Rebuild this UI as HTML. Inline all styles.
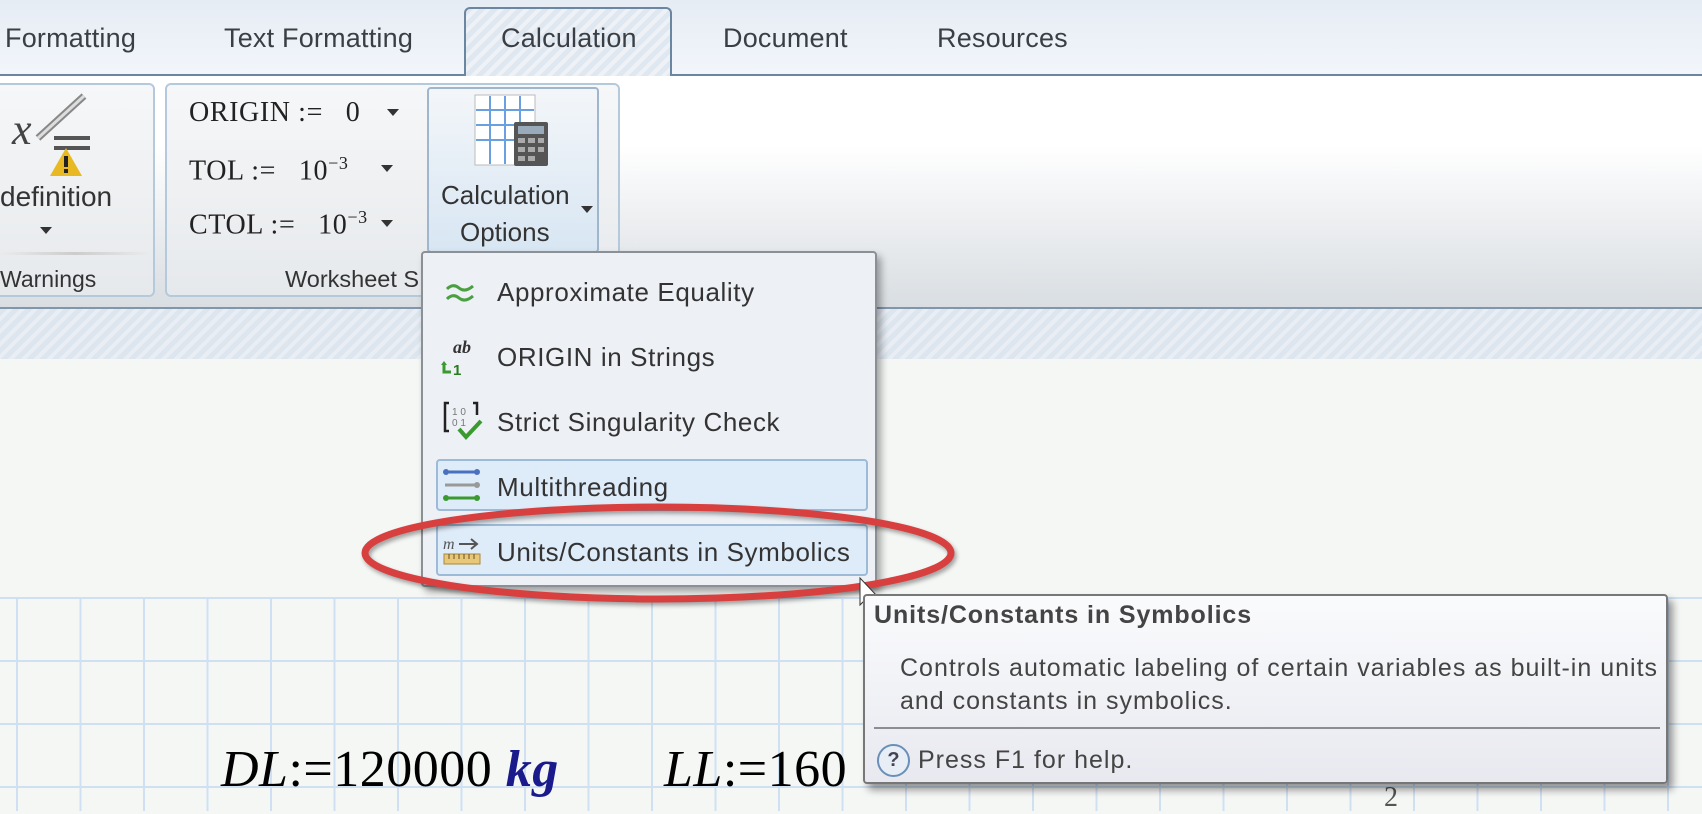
<!DOCTYPE html>
<html><head><meta charset="utf-8"><style>
*{margin:0;padding:0;box-sizing:border-box}
body{width:1702px;height:811px;overflow:hidden;position:relative;background:#f5f7f5;font-family:"Liberation Sans",sans-serif;color:#333}
.abs{position:absolute}
.tabbar{left:0;top:0;width:1702px;height:76px;background:linear-gradient(#e6ecf4,#f2f6fb);border-bottom:2px solid #6a86a0}
.tab{position:absolute;top:23px;font-size:27px;color:#3a3f46;letter-spacing:0.2px}
.ribbon{left:0;top:76px;width:1702px;height:231px;background:linear-gradient(#fff 0%,#fff 30%,#eef0f2 60%,#d9dee2 100%)}
.hatch{left:0;top:307px;width:1702px;height:52px;border-top:2px solid #7f96ac;background:repeating-linear-gradient(135deg,#dde5ee 0 5px,#e9eef4 5px 9px)}
.group{border:2px solid #b5c9dc;border-radius:6px;background:linear-gradient(#f6f7f8,#e6e9ec)}
.m{font-family:"Liberation Serif",serif;font-size:28px;color:#222;letter-spacing:0.6px;white-space:pre}
.arr{width:0;height:0;border-left:6px solid transparent;border-right:6px solid transparent;border-top:7px solid #333;position:absolute}
.menu{left:421px;top:251px;width:456px;height:336px;background:#edf1f5;border:2px solid #8b9096;border-radius:4px;box-shadow:4px 5px 8px rgba(0,0,0,.35)}
.item{position:absolute;left:74px;font-size:26px;letter-spacing:0.6px;color:#333}
.hl{position:absolute;left:13px;width:432px;height:52px;border:2px solid #9dbad6;border-radius:4px;background:#deebf8}
.tip{left:863px;top:594px;width:805px;height:190px;border:2px solid #777;border-radius:4px;background:linear-gradient(#fafbfc,#e8e9f0);box-shadow:5px 6px 8px rgba(0,0,0,.4)}
.math{font-family:"Liberation Serif",serif;font-size:52px;color:#000;letter-spacing:0.5px}
</style></head><body>
<div class="abs tabbar">
 <div class="tab" style="left:5px">Formatting</div>
 <div class="tab" style="left:224px">Text Formatting</div>
 <div class="abs" style="left:464px;top:7px;width:208px;height:71px;border:2px solid #6a86a0;border-bottom:none;border-radius:6px 6px 0 0;background:repeating-linear-gradient(135deg,#dfe7f0 0 5px,#eef2f7 5px 9px)"></div>
 <div class="tab" style="left:501px">Calculation</div>
 <div class="tab" style="left:723px">Document</div>
 <div class="tab" style="left:937px">Resources</div>
</div>
<div class="abs ribbon"></div>
<div class="abs group" style="left:-8px;top:83px;width:163px;height:214px"></div>
<div class="abs group" style="left:165px;top:83px;width:455px;height:214px"></div>
<svg class="abs" style="left:10px;top:92px" width="82" height="84" viewBox="0 0 82 84">
 <text x="2" y="52" font-family="Liberation Serif" font-style="italic" font-size="44" fill="#444">x</text>
 <path d="M28 46 L74 4" stroke="#888" stroke-width="7"/><path d="M28 46 L74 4" stroke="#ddd" stroke-width="3"/>
 <rect x="44" y="44" width="36" height="4" fill="#555"/><rect x="44" y="54" width="36" height="4" fill="#555"/>
 <path d="M56 56 L72 84 L40 84 Z" fill="#e8b923"/><rect x="54" y="64" width="4" height="11" fill="#222"/><rect x="54" y="77" width="4" height="4" fill="#222"/>
</svg>
<div class="abs" style="left:0;top:181px;font-size:28px;color:#333">definition</div>
<div class="arr" style="left:40px;top:227px"></div>
<div class="abs" style="left:0;top:266px;font-size:23px;color:#333">Warnings</div>
<div class="abs" style="left:0;top:252px;width:150px;height:3px;background:linear-gradient(90deg,transparent,#ccc,transparent)"></div>
<div class="abs m" style="left:189px;top:97px">ORIGIN :=   0</div>
<div class="arr" style="left:387px;top:109px"></div>
<div class="abs m" style="left:189px;top:153px">TOL :=   10<sup style="font-size:18px">−3</sup></div>
<div class="arr" style="left:381px;top:165px"></div>
<div class="abs m" style="left:189px;top:207px">CTOL :=   10<sup style="font-size:18px">−3</sup></div>
<div class="arr" style="left:381px;top:220px"></div>
<div class="abs" style="left:285px;top:266px;font-size:23.5px;color:#333">Worksheet S</div>
<div class="abs" style="left:427px;top:87px;width:172px;height:166px;border:2px solid #9fb6cc;border-radius:4px;background:linear-gradient(#f3f6f9,#d8e6f3)"></div>
<svg class="abs" style="left:474px;top:94px" width="76" height="74" viewBox="0 0 76 74">
 <rect x="1" y="1" width="60" height="70" fill="#fff" stroke="#bbb"/>
 <g stroke="#6aa0e0" stroke-width="2"><path d="M16 2V70M31 2V70M46 2V70M2 16H60M2 31H60M2 46H60"/></g>
 <rect x="40" y="28" width="34" height="44" rx="2" fill="#555"/><rect x="44" y="32" width="26" height="8" fill="#9ab"/>
 <g fill="#aaa"><rect x="44" y="44" width="7" height="5"/><rect x="54" y="44" width="7" height="5"/><rect x="64" y="44" width="6" height="5"/><rect x="44" y="53" width="7" height="5"/><rect x="54" y="53" width="7" height="5"/><rect x="64" y="53" width="6" height="5"/><rect x="44" y="62" width="7" height="5"/><rect x="54" y="62" width="7" height="5"/></g>
</svg>
<div class="abs" style="left:441px;top:180px;font-size:26px;color:#333">Calculation</div>
<div class="abs" style="left:460px;top:217px;font-size:26px;color:#333">Options</div>
<div class="arr" style="left:581px;top:206px"></div>
<div class="abs hatch"></div>
<div class="abs" style="left:0;top:597px;width:1702px;height:214px;border-top:2px solid #cfe0f3;background-image:linear-gradient(90deg,#cfe0f3 2px,transparent 2px),linear-gradient(#cfe0f3 2px,transparent 2px);background-size:63.5px 63px;background-position:16px 0,0 61px"></div>
<div class="abs math" style="left:221px;top:740px"><i>DL</i>:=120000 <b style="color:#1a1a8c"><i>kg</i></b></div>
<div class="abs math" style="left:664px;top:740px"><i>LL</i>:=160</div>
<div class="abs" style="left:1384px;top:782px;font-family:'Liberation Serif',serif;font-size:28px;color:#555">2</div>
<div class="abs menu">
 <svg class="abs" style="left:22px;top:28px" width="30" height="24" viewBox="0 0 30 24"><path d="M2 8 Q8 2 14 7 T28 5M2 18 Q8 12 14 17 T28 15" stroke="#4aa040" stroke-width="3" fill="none"/></svg>
 <div class="item" style="top:24px">Approximate Equality</div>
 <svg class="abs" style="left:18px;top:84px" width="42" height="40" viewBox="0 0 42 40"><text x="12" y="16" font-family="Liberation Serif" font-style="italic" font-weight="bold" font-size="18" fill="#333">ab</text><path d="M3 26V35H10" stroke="#3a9a30" stroke-width="3" fill="none"/><path d="M3 24 L0 28 L6 28Z" fill="#3a9a30"/><text x="12" y="38" font-family="Liberation Sans" font-weight="bold" font-size="15" fill="#2a7a20">1</text></svg>
 <div class="item" style="top:89px">ORIGIN in Strings</div>
 <svg class="abs" style="left:20px;top:148px" width="40" height="40" viewBox="0 0 40 40"><path d="M6 2H2V30H6M30 2H34V14" stroke="#222" stroke-width="2.5" fill="none"/><text x="9" y="14" font-size="10" fill="#777" font-family="Liberation Sans">1 0</text><text x="9" y="25" font-size="10" fill="#777" font-family="Liberation Sans">0 1</text><path d="M16 28 L23 36 L38 20" stroke="#3a9a30" stroke-width="4" fill="none"/></svg>
 <div class="item" style="top:154px">Strict Singularity Check</div>
 <div class="hl" style="top:206px"></div>
 <svg class="abs" style="left:20px;top:214px" width="38" height="36" viewBox="0 0 38 36"><g stroke-width="3"><path d="M2 5H34" stroke="#4a70c0"/><path d="M2 18H34" stroke="#999"/><path d="M2 31H34" stroke="#3a9a30"/></g><circle cx="3" cy="5" r="3" fill="#4a70c0"/><circle cx="34" cy="5" r="3" fill="#4a70c0"/><circle cx="34" cy="18" r="3" fill="#999"/><circle cx="3" cy="31" r="3" fill="#3a9a30"/><circle cx="34" cy="31" r="3" fill="#3a9a30"/></svg>
 <div class="item" style="top:219px">Multithreading</div>
 <div class="hl" style="top:271px"></div>
 <svg class="abs" style="left:20px;top:282px" width="38" height="32" viewBox="0 0 38 32"><text x="0" y="14" font-family="Liberation Serif" font-style="italic" font-size="16" fill="#555">m</text><path d="M16 9H34M28 4L34 9L28 14" stroke="#555" stroke-width="2" fill="none"/><rect x="1" y="19" width="36" height="10" fill="#e8c878" stroke="#a88a40"/><path d="M6 19V24M11 19V24M16 19V24M21 19V24M26 19V24M31 19V24" stroke="#6a5020"/></svg>
 <div class="item" style="top:284px">Units/Constants in Symbolics</div>
</div>
<svg class="abs" style="left:0;top:0;pointer-events:none" width="1702" height="811"><ellipse cx="658" cy="553" rx="293" ry="46" fill="none" stroke="#d8403f" stroke-width="7" filter="drop-shadow(2px 3px 2px rgba(0,0,0,.35))"/><path d="M860 578 L860 605 L866 599 L871 610 L875 608 L870 597 L878 597Z" fill="#fff" stroke="#333"/></svg>
<div class="abs tip">
 <div class="abs" style="left:9px;top:5px;font-size:25px;font-weight:bold;letter-spacing:0.9px;color:#444">Units/Constants in Symbolics</div>
 <div class="abs" style="left:35px;top:56px;font-size:25px;letter-spacing:1px;color:#444;line-height:33px;white-space:nowrap">Controls automatic labeling of certain variables as built-in units<br>and constants in symbolics.</div>
 <div class="abs" style="left:9px;top:131px;width:786px;height:2px;background:#8a8e94"></div>
 <div class="abs" style="left:12px;top:148px;width:33px;height:33px;border-radius:50%;border:2px solid #6a8fb8;background:#e8eef6;font-size:20px;font-weight:bold;color:#445;text-align:center;line-height:29px">?</div>
 <div class="abs" style="left:53px;top:150px;font-size:25px;letter-spacing:1px;color:#444">Press F1 for help.</div>
</div>
</body></html>
